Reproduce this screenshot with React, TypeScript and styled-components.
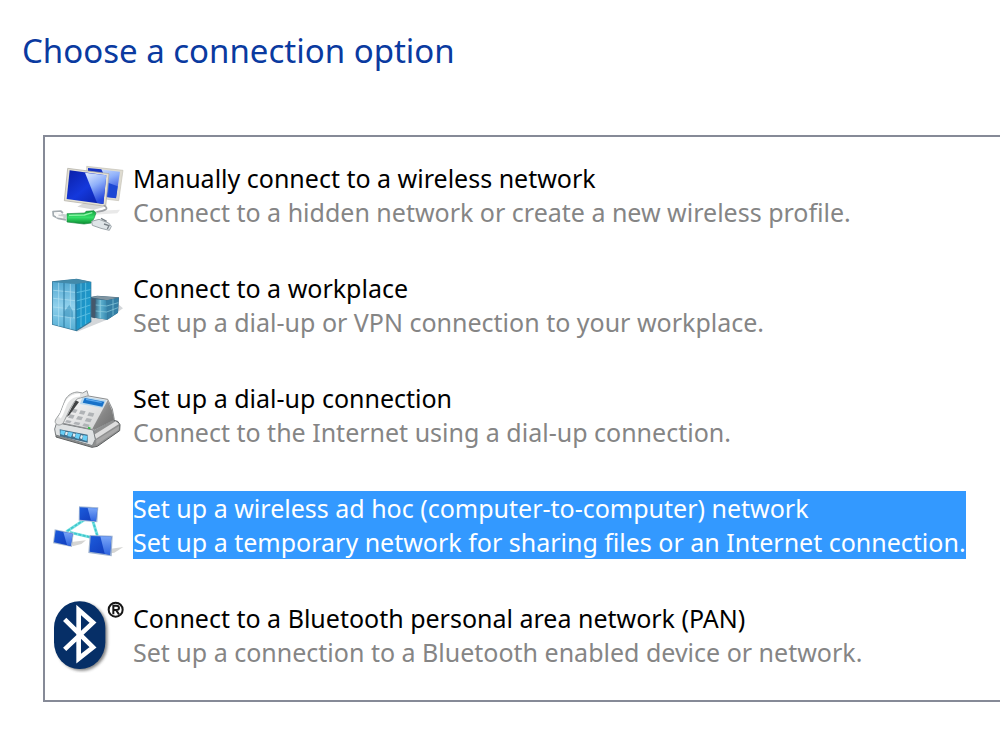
import React, { useState } from "react";
import styled, { createGlobalStyle } from "styled-components";

const GlobalStyle = createGlobalStyle`
  * { box-sizing: border-box; }
  body {
    margin: 0;
    background: #ffffff;
    font-family: "Noto Sans", "Open Sans", sans-serif;
  }
`;

const Page = styled.main`
  display: flex;
  flex-direction: column;
  gap: 60px;
  padding: 26px 0 48px;
`;

const Title = styled.h1`
  margin: 0;
  padding-left: 22px;
  font-size: 33px;
  line-height: 49px;
  font-weight: 400;
  color: #0a3aa0;
`;

const OptionList = styled.ul`
  display: flex;
  flex-direction: column;
  gap: 34px;
  margin: 0 0 0 43px;
  padding: 20px 0 27px 5px;
  list-style: none;
  border: 2px solid #868a97;
  border-right: 0;
`;

const OptionButton = styled.button`
  display: flex;
  align-items: center;
  gap: 7px;
  width: 100%;
  padding: 0;
  border: 0;
  background: none;
  font: inherit;
  text-align: left;
  cursor: pointer;
`;

const Icon = styled.svg`
  flex: none;
  width: 76px;
  height: 76px;
`;

const OptionText = styled.span<{ $selected: boolean }>`
  display: flex;
  flex-direction: column;
  background: ${(p) => (p.$selected ? "#3399ff" : "transparent")};
  color: ${(p) => (p.$selected ? "#ffffff" : "#000000")};
`;

const OptionTitle = styled.span`
  font-size: 25px;
  line-height: 34px;
`;

const OptionDetail = styled(OptionTitle)<{ $selected: boolean }>`
  color: ${(p) => (p.$selected ? "#ffffff" : "#858585")};
`;

function WirelessIcon() {
  return (
    <Icon viewBox="18 6 228 228" aria-hidden="true">
      <defs>
        <linearGradient id="glass" x1="0" y1="0" x2="1" y2="1">
          <stop offset="0" stopColor="#0b1fa6" />
          <stop offset=".5" stopColor="#1438dc" />
          <stop offset="1" stopColor="#0a1c9c" />
        </linearGradient>
        <linearGradient id="shine" x1="0" y1="0" x2=".4" y2="1">
          <stop offset="0" stopColor="#e4efff" />
          <stop offset=".5" stopColor="#8fb0fa" />
          <stop offset="1" stopColor="#2749dd" />
        </linearGradient>
        <linearGradient id="plug" x1="0" y1="0" x2="0" y2="1">
          <stop offset="0" stopColor="#12a03c" />
          <stop offset=".5" stopColor="#35e06a" />
          <stop offset="1" stopColor="#0b8c30" />
        </linearGradient>
      </defs>
      <path d="M150 168 228 164 220 175 150 179Z" fill="#e9e9e9" />
      <path d="M128 34 237 46 224 137 190 133 128 90Z" fill="#dedbd0" stroke="#c4c1b6" strokeWidth="2" />
      <path d="M132 39 228 50 216 130 190 127 132 88Z" fill="url(#shine)" />
      <path d="M132 39 172 43 180 60 132 54Z" fill="#1532c0" />
      <path d="M194 84 221 94 216 129 193 126Z" fill="#1d48d4" />
      <path d="M125 140 164 146 180 156 150 164 100 155Z" fill="#d8d8d8" />
      <path d="M71 40 195 56 185 154 61 137Z" fill="#e3e0d4" stroke="#aaa89f" strokeWidth="2" />
      <path d="M77 46 187 61 178 147 68 132Z" fill="url(#glass)" />
      <path d="M123 53 187 61 178 147 159 143Z" fill="url(#shine)" />
      <path d="M179 151C198 162 184 167 157 171" fill="none" stroke="#9ea1a5" strokeWidth="5" />
      <path d="M66 186 43 182" stroke="#c9ced1" strokeWidth="15" />
      <path d="M66 195 42 190 28 182 27 170 50 168 57 174" fill="none" stroke="#a3abb0" strokeWidth="5" strokeLinejoin="round" />
      <path d="M31 175 52 177M36 184 58 187" stroke="#f6f6f6" strokeWidth="5" />
      <path d="M69 176 122 174 126 169 150 167 156 174 150 190 142 204 120 207 69 201Z" fill="url(#plug)" stroke="#208846" strokeWidth="2" />
      <path d="M75 181 121 180 145 173" fill="none" stroke="#8af4a5" strokeWidth="4" />
      <path d="M143 199 165 193 194 204 202 214 196 226 171 220 145 211Z" fill="#dfe5e8" stroke="#9da5aa" strokeWidth="3" />
      <path d="M171 190 188 199M180 207 195 212 190 222" fill="none" stroke="#777f85" strokeWidth="4" />
    </Icon>
  );
}

function WorkplaceIcon() {
  return (
    <Icon viewBox="18 6 228 228" aria-hidden="true">
      <defs>
        <linearGradient id="frontWall" x1="0" y1="0" x2="0" y2="1">
          <stop offset="0" stopColor="#54a9d2" />
          <stop offset=".5" stopColor="#8fd0ec" />
          <stop offset="1" stopColor="#55aed4" />
        </linearGradient>
        <linearGradient id="sideWall" x1="0" y1="0" x2="1" y2="1">
          <stop offset="0" stopColor="#2589b9" />
          <stop offset="1" stopColor="#16a0d5" />
        </linearGradient>
        <linearGradient id="annex" x1="0" y1="0" x2="1" y2="0">
          <stop offset="0" stopColor="#3a6680" />
          <stop offset=".4" stopColor="#64b6d3" />
          <stop offset="1" stopColor="#3486ae" />
        </linearGradient>
      </defs>
      <path d="M205 103 237 130 187 165 98 201Z" fill="#d4d7da" />
      <path d="M139 96 160 92 225 97 222 143 190 164 140 157Z" fill="#3c637b" />
      <path d="M141 97 161 93 224 98 190 106Z" fill="#8195a1" />
      <path d="M155 103 188 106 190 164 153 158Z" fill="url(#annex)" />
      <path d="M188 106 224 98 222 143 190 164Z" fill="#347fa5" />
      <path d="M155 120 188 123 223 113M155 138 188 141 222 128M169 105V160M207 103V152" fill="none" stroke="#8fcfdf" strokeWidth="2" />
      <path d="M139 98 154 103 153 160 139 155Z" fill="#45586b" />
      <path d="M24 49 98 41 142 50 142 171 98 199 24 179Z" fill="#397999" />
      <path d="M27 50 97 42 138 50 95 58Z" fill="#438aaa" />
      <path d="M26 51 94 57 96 196 26 178Z" fill="url(#frontWall)" />
      <path d="M95 57 140 51 139 169 96 196Z" fill="url(#sideWall)" />
      <path d="M28 76 93 82M28 100 93 107M28 126 93 133M28 151 94 159M44 53V183M79 57V191" fill="none" stroke="#b2e1f1" strokeWidth="2" />
      <path d="M97 83 139 74M97 108 139 97M97 134 139 120M97 159 139 144M111 55V186M125 53V177" fill="none" stroke="#58bce0" strokeWidth="3" />
      <path d="M61 140 76 119 87 140 87 158 61 154Z" fill="#398fba" opacity=".55" />
      <path d="M60 54V187M96 58V197" stroke="#28779e" strokeWidth="3" />
    </Icon>
  );
}

function PhoneIcon() {
  return (
    <Icon viewBox="18 -9 228 228" aria-hidden="true">
      <defs>
        <linearGradient id="casing" x1="0" y1="0" x2="1" y2="1">
          <stop offset="0" stopColor="#ffffff" />
          <stop offset="1" stopColor="#c9cacb" />
        </linearGradient>
        <linearGradient id="casingSide" x1="0" y1="0" x2="1" y2="1">
          <stop offset="0" stopColor="#c2c2c2" />
          <stop offset=".5" stopColor="#868686" />
          <stop offset="1" stopColor="#6d6d6d" />
        </linearGradient>
      </defs>
      <path d="M37 135 195 118 221 124 228 134 227 152 160 199 144 202 36 171Z" fill="#8f9090" stroke="#5c5f60" strokeWidth="3" strokeLinejoin="round" />
      <path d="M150 164 215 124 225 132 156 176Z" fill="#dedede" />
      <path d="M157 180 225 138 224 149 157 194Z" fill="#a8a8a8" />
      <path d="M38 128 148 150 154 178 145 197 35 165 32 147Z" fill="#dfe2e3" stroke="#7d8183" strokeWidth="3" strokeLinejoin="round" />
      <path d="M47 148 131 164 131 188 48 169Z" fill="#426f8b" />
      <path d="M50 151 64 153 60 166 49 162ZM73 155 87 158 81 171 70 168ZM96 160 109 163 104 177 93 173ZM118 165 130 168 128 183 115 179Z" fill="#68cff7" />
      <path d="M65 155 72 157 69 166 63 164ZM88 160 95 162 92 171 86 169ZM111 165 117 167 114 177 108 175Z" fill="#e2edf2" />
      <path d="M110 44 191 58 205 87 211 119 151 152 143 148 48 128 67 88Z" fill="url(#casing)" stroke="#8b8e90" strokeWidth="3" strokeLinejoin="round" />
      <path d="M191 61 204 91 210 119 151 150 145 146Z" fill="url(#casingSide)" />
      <path d="M116 49 186 61 176 84 108 72Z" fill="#b9d9ef" />
      <path d="M122 54 181 65 175 80 116 68Z" fill="#1872c9" />
      <path d="M126 58 173 67" stroke="#5eabf0" strokeWidth="4" />
      <path d="M87 86 101 89 95 99 81 96ZM110 91 125 94 120 104 105 101ZM135 97 151 100 147 110 130 107ZM78 103 92 106 87 116 72 113ZM102 108 117 111 112 121 96 118ZM128 114 144 117 139 127 122 124ZM68 120 83 123 78 130 63 127ZM93 125 109 128 105 136 88 132ZM120 130 137 134 133 142 115 138Z" fill="#b0b3b6" />
      <path d="M95 61 105 66 76 105 67 112Z" fill="#414344" />
      <path d="M62 64C66 51 80 38 99 36L116 39 129 32 133 47 109 54C96 55 90 67 79 85L61 122C57 135 42 139 36 131C28 122 41 112 49 98Z" fill="#e4e5e5" stroke="#9a9d9e" strokeWidth="3" />
      <path d="M47 113C58 99 59 79 69 65C78 52 88 45 108 45" fill="none" stroke="#ffffff" strokeWidth="9" />
      <path d="M132 143 139 145" stroke="#32bd45" strokeWidth="5" />
    </Icon>
  );
}

function AdHocIcon() {
  return (
    <Icon viewBox="18 -9 228 228" aria-hidden="true">
      <defs>
        <linearGradient id="screenDark" x1="0" y1="0" x2="1" y2="1">
          <stop offset="0" stopColor="#1c5cdc" />
          <stop offset="1" stopColor="#1038b8" />
        </linearGradient>
        <linearGradient id="screenLight" x1="0" y1="0" x2="0" y2="1">
          <stop offset="0" stopColor="#79a5f7" />
          <stop offset="1" stopColor="#2f65e0" />
        </linearGradient>
      </defs>
      <path d="M82 156 126 151 112 162 86 169ZM201 176 238 171 211 188 188 191Z" fill="#d5d5d3" />
      <path d="M121 89 67 125M146 91 160 137M78 127 144 143" fill="none" stroke="#7be3e3" strokeWidth="9" />
      <path d="M121 89 67 125M146 91 160 137M78 127 144 143" fill="none" stroke="#3fc6cc" strokeWidth="5" strokeDasharray="9 4" />
      <path d="M105 49 163 52 160 97 104 92Z" fill="#a4b9d6" />
      <path d="M107 52 160 55 156 94 107 89Z" fill="url(#screenDark)" />
      <path d="M131 54 160 55 156 94 141 92Z" fill="url(#screenLight)" />
      <path d="M32 118 89 129 84 171 27 160Z" fill="#a9bbd3" />
      <path d="M35 121 86 131 80 168 30 157Z" fill="url(#screenDark)" />
      <path d="M58 126 86 131 80 168 69 165Z" fill="url(#screenLight)" />
      <path d="M137 135 206 137 203 199 133 189Z" fill="#9db2d0" />
      <path d="M140 138 202 140 198 194 137 185Z" fill="url(#screenDark)" />
      <path d="M169 139 202 140 198 194 182 191Z" fill="url(#screenLight)" />
    </Icon>
  );
}

function BluetoothIcon() {
  return (
    <Icon viewBox="18 21 228 228" aria-hidden="true">
      <defs>
        <filter id="softShadow" x="-20%" y="-20%" width="140%" height="140%">
          <feGaussianBlur stdDeviation="4" />
        </filter>
      </defs>
      <rect x="37" y="39" width="153" height="203" rx="76" ry="80" fill="#666666" opacity=".8" filter="url(#softShadow)" />
      <rect x="30" y="34" width="154" height="203" rx="76" ry="80" fill="#062f67" />
      <path d="M62 88 147 172 104 206V60L147 98 62 178" fill="none" stroke="#ffffff" strokeWidth="14" />
      <circle cx="215" cy="59" r="21" fill="none" stroke="#161616" strokeWidth="6" />
      <path d="M208 73V47H217Q225 47 225 54Q225 60 217 60H208M216 60 225 73" fill="none" stroke="#161616" strokeWidth="6" />
    </Icon>
  );
}

const options = [
  {
    Picture: WirelessIcon,
    title: "Manually connect to a wireless network",
    detail: "Connect to a hidden network or create a new wireless profile.",
  },
  {
    Picture: WorkplaceIcon,
    title: "Connect to a workplace",
    detail: "Set up a dial-up or VPN connection to your workplace.",
  },
  {
    Picture: PhoneIcon,
    title: "Set up a dial-up connection",
    detail: "Connect to the Internet using a dial-up connection.",
  },
  {
    Picture: AdHocIcon,
    title: "Set up a wireless ad hoc (computer-to-computer) network",
    detail: "Set up a temporary network for sharing files or an Internet connection.",
  },
  {
    Picture: BluetoothIcon,
    title: "Connect to a Bluetooth personal area network (PAN)",
    detail: "Set up a connection to a Bluetooth enabled device or network.",
  },
];

export default function App() {
  const [selected, setSelected] = useState(3);
  return (
    <>
      <GlobalStyle />
      <Page>
        <Title>Choose a connection option</Title>
        <OptionList>
          {options.map(({ Picture, title, detail }, index) => (
            <li key={title}>
              <OptionButton
                type="button"
                aria-pressed={index === selected}
                onClick={() => setSelected(index)}
              >
                <Picture />
                <OptionText $selected={index === selected}>
                  <OptionTitle>{title}</OptionTitle>
                  <OptionDetail $selected={index === selected}>{detail}</OptionDetail>
                </OptionText>
              </OptionButton>
            </li>
          ))}
        </OptionList>
      </Page>
    </>
  );
}
